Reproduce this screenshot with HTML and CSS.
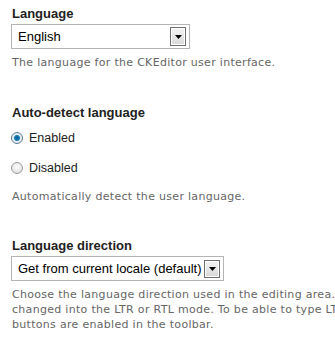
FILE: index.html
```html
<!DOCTYPE html>
<html lang="en">
<head>
<meta charset="utf-8">
<title>CKEditor language settings</title>
<link rel="stylesheet" href="styles.css">
</head>
<body>
<div class="form">
  <div class="form-item item-language">
    <label class="field-label">Language</label>
    <div class="select select-language">
      <span class="select-value">English</span>
      <span class="select-button"><svg width="7" height="4" viewBox="0 0 7 4"><path d="M0 0H7L3.5 4Z" fill="#000"/></svg></span>
    </div>
    <div class="description">The language for the CKEditor user interface.</div>
  </div>

  <div class="form-item item-detect">
    <label class="field-label">Auto-detect language</label>
    <div class="radios">
      <label class="radio-row"><span class="radio checked"></span><span>Enabled</span></label>
      <label class="radio-row"><span class="radio"></span><span>Disabled</span></label>
    </div>
    <div class="description">Automatically detect the user language.</div>
  </div>

  <div class="form-item item-direction">
    <label class="field-label">Language direction</label>
    <div class="select select-direction">
      <span class="select-value">Get from current locale (default)</span>
      <span class="select-button"><svg width="7" height="4" viewBox="0 0 7 4"><path d="M0 0H7L3.5 4Z" fill="#000"/></svg></span>
    </div>
    <div class="description">Choose the language direction used in the editing area. The language direction of CKEditor will be<br>changed into the LTR or RTL mode. To be able to type LTR text in RTL mode and vice versa, make sure the BiDi<br>buttons are enabled in the toolbar.</div>
  </div>
</div>
</body>
</html>
```

FILE: styles.css
```css
html, body {
  margin: 0;
  padding: 0;
  background: #fff;
  overflow: hidden;
}
body {
  font-family: "Liberation Sans", Arial, sans-serif;
  color: #333;
}
.form {
  padding: 6px 0 0 12px;
  width: 900px;
}
.form-item {
  display: flex;
  flex-direction: column;
  align-items: flex-start;
}
.item-detect {
  margin-top: 35px;
}
.item-direction {
  margin-top: 34px;
}
.field-label {
  font-weight: bold;
  font-size: 13px;
  line-height: 16px;
  color: #222;
  margin-bottom: 2px;
}
.select {
  display: flex;
  align-items: center;
  box-sizing: border-box;
  height: 25px;
  margin-left: -1px;
  border: 1px solid #b4b4b4;
  background: #fff;
  padding: 0 3px 0 6px;
  font-size: 13px;
  color: #000;
}
.select-language { width: 179px; }
.select-direction { width: 213px; }
.select-value {
  flex: 1;
  white-space: nowrap;
}
.select-button {
  box-sizing: border-box;
  width: 16px;
  height: 19px;
  border: 1px solid #6f6f6f;
  box-shadow: inset 0 0 0 1px #fff;
  background: linear-gradient(#f4f4f4, #d8d8d8);
  display: flex;
  align-items: center;
  justify-content: center;
}
.select-direction .select-button {
  height: 18px;
  margin-left: 2px;
}
.description {
  font-family: "DejaVu Sans", Verdana, sans-serif;
  font-size: 11px;
  letter-spacing: 0.3px;
  line-height: 15px;
  color: #666;
  margin-top: 6px;
  white-space: nowrap;
}
.radios {
  display: flex;
  flex-direction: column;
  margin-top: 0;
}
.radio-row {
  display: flex;
  align-items: center;
  gap: 6px;
  height: 30px;
  font-size: 12.5px;
  color: #222;
  margin-left: -1px;
}
.radio {
  box-sizing: border-box;
  width: 12px;
  height: 12px;
  border-radius: 50%;
  border: 1px solid #9a9a9a;
  background: radial-gradient(circle at 50% 40%, #fdfdfd, #d9d9d9);
}
.radio.checked {
  border-color: #5a7a94;
  background: radial-gradient(circle at 50% 50%, #0d5d8f 0, #1a7fb8 2.5px, #dfeaf1 3.5px, #f5f8fa 6px);
}
```
